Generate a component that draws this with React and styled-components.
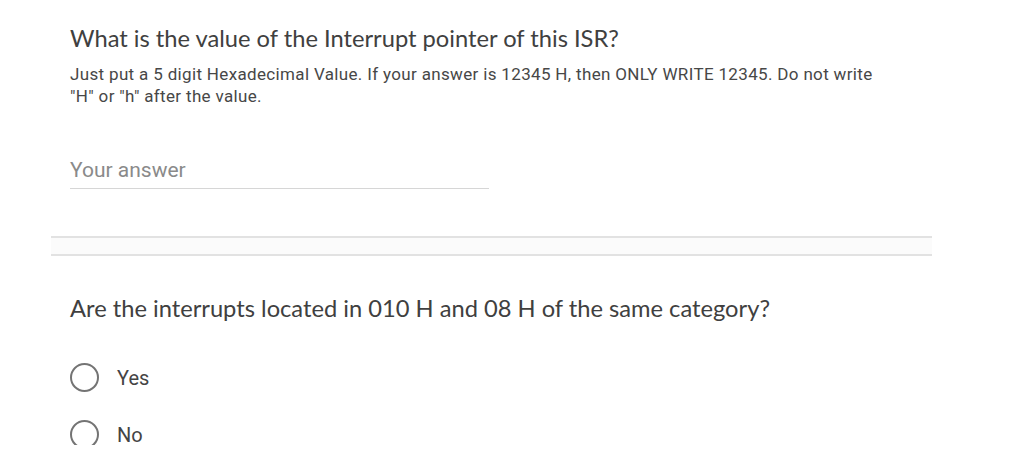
import React from 'react'
import styled, { createGlobalStyle } from 'styled-components'

const GlobalStyle = createGlobalStyle`
    body {
        margin: 0;
        background: #ffffff;
        font-family: Roboto, "Liberation Sans", sans-serif;
    }
`

const Page = styled.div`
    width: 881px;
    margin-left: 51px;
    height: 445px;
    overflow: hidden;
`

const Card = styled.div`
    background: #ffffff;
    padding: ${props => props.pad || '0 19px'};
    border-top: ${props => (props.top ? '2px solid #e2e2e2' : 'none')};
    border-bottom: ${props => (props.bottom ? '2px solid #e2e2e2' : 'none')};
`

const Gap = styled.div`
    height: 16px;
    background: #fbfbfb;
`

const Question = styled.div`
    font-family: Lato, "Open Sans", sans-serif;
    font-size: 23.7px;
    line-height: 30px;
    color: #404040;
`

const Description = styled.div`
    margin-top: 10px;
    font-size: 17px;
    line-height: 22px;
    letter-spacing: 0.34px;
    color: #474747;
`

const AnswerField = styled.div`
    margin-top: 51px;
    width: 419px;
    padding-bottom: 6px;
    border-bottom: 1px solid #d6d6d6;
    font-size: 21px;
    line-height: 24px;
    color: #8a8a8a;
`

const Options = styled.div`
    margin-top: 40px;
    display: flex;
    flex-direction: column;
    gap: 28px;
`

const Option = styled.label`
    display: flex;
    align-items: center;
    gap: 18px;
    font-size: 20px;
    color: #444444;
`

const Radio = styled.span`
    box-sizing: border-box;
    width: 29px;
    height: 29px;
    border: 2.5px solid #747474;
    border-radius: 50%;
    flex-shrink: 0;
`

export default function App() {
    return (
        <Page>
            <GlobalStyle />
            <Card bottom pad="23px 19px 47px">
                <Question>What is the value of the Interrupt pointer of this ISR?</Question>
                <Description>
                    Just put a 5 digit Hexadecimal Value. If your answer is 12345 H, then ONLY WRITE 12345. Do not write
                    <br />
                    "H" or "h" after the value.
                </Description>
                <AnswerField>Your answer</AnswerField>
            </Card>
            <Gap />
            <Card top pad="37px 19px 0">
                <Question>Are the interrupts located in 010 H and 08 H of the same category?</Question>
                <Options>
                    <Option><Radio />Yes</Option>
                    <Option><Radio />No</Option>
                </Options>
            </Card>
        </Page>
    )
}
